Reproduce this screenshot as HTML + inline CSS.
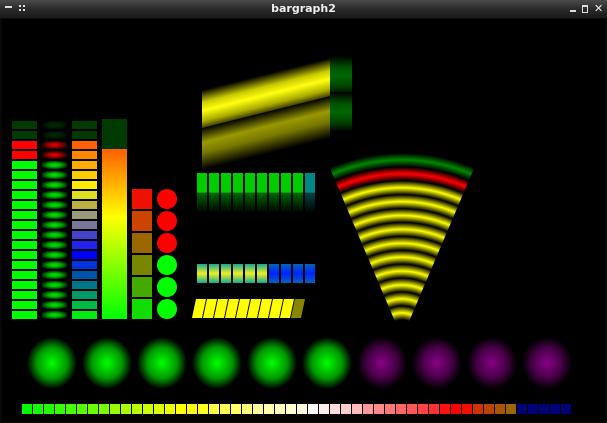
<!DOCTYPE html>
<html><head><style>
html,body{margin:0;padding:0;width:607px;height:423px;overflow:hidden;background:#080808}
#t{position:absolute;left:0;top:0;width:607px;height:18px;background:linear-gradient(#4a4a4a,#2a2a2a 50%,#1a1a1a);color:#eee;font:bold 11px "DejaVu Sans","Liberation Sans",sans-serif;text-align:center;line-height:18px}
#c{position:absolute;left:2px;top:19px;width:603px;height:402px;background:#000}
.a{position:absolute}
</style></head><body>
<div id="t">bargraph2
<span class="a" style="left:5px;top:6px;width:7px;height:2px;background:#ddd"></span>
<span class="a" style="left:19px;top:5px;width:2px;height:2px;background:#ddd;box-shadow:4px 0 #ddd,0 4px #ddd,4px 4px #ddd"></span>
<span class="a" style="left:570px;top:10px;width:6px;height:2px;background:#ddd"></span>
<span class="a" style="left:582px;top:5px;width:4px;height:5px;border:1px solid #ddd;border-top-width:2px"></span>
<span class="a" style="left:594px;top:2px;font-size:11px;line-height:14px">✕</span>
</div>
<div id="c"></div>
<svg id="s" class="a" style="left:0;top:0" width="607" height="423" xmlns="http://www.w3.org/2000/svg"><defs id="d"></defs><g id="g"></g></svg>
<script>
var g=document.getElementById('g'),d=document.getElementById('d'),N='http://www.w3.org/2000/svg',gid=0;
function el(t,a,p){var e=document.createElementNS(N,t);for(var k in a)e.setAttribute(k,a[k]);(p||g).appendChild(e);return e}
function grad(type,attrs,stops){var id='g'+(gid++);var e=el(type,Object.assign({id:id},attrs),d);stops.forEach(function(s){el('stop',{offset:s[0],'stop-color':s[1]},e)});return 'url(#'+id+')'}
function R(x,y,w,h,f){return el('rect',{x:x,y:y,width:w,height:h,fill:f})}
for(var i=0;i<20;i++){var y=121+i*10;var c=i<2?'#003a00':i<4?'#ff0000':'#00ff00';R(12,y,25,8,c);
 var c2=i<2?'#002800':i<4?'#ee0000':'#00ee00';
 R(42,y,25,8,grad('radialGradient',{cx:.5,cy:.5,r:.6},[[0,c2],[.45,i<2?'#002000':i<4?'#990000':'#00aa00'],[1,'#000']]));}
var c3=['#003a00','#003a00','#ff6000','#ff8800','#ffaa00','#ffcc00','#ffee00','#dddd22','#bbb044','#999977','#777799','#4444cc','#2222ee','#0000ff','#0033dd','#0055aa','#007788','#009966','#00bb44','#00ee11'];
for(i=0;i<20;i++)R(72,121+i*10,25,8,c3[i]);
R(102,119,25,30,'#003a00');
R(102,149,25,170,grad('linearGradient',{x1:0,y1:0,x2:0,y2:1},[[0,'#ff6000'],[.4,'#ffff00'],[.6,'#aaff00'],[1,'#00ff00']]));
var c5=['#ee1100','#cc4400','#996600','#778800','#44aa00','#11dd00'];
for(i=0;i<6;i++){R(132,189+i*22,20,20,c5[i]);el('circle',{cx:167,cy:199+i*22,r:10,fill:i<3?'#ff0000':'#00ff00'});}
var tg=el('g',{transform:'translate(202,95) skewY(-14)'});
var yb=grad('linearGradient',{x1:0,y1:0,x2:0,y2:1},[[0,'#000'],[.3,'#cccc00'],[.5,'#ffff10'],[.75,'#aaaa00'],[1,'#000']]);
var yb2=grad('linearGradient',{x1:0,y1:0,x2:0,y2:1},[[0,'#000'],[.35,'#999900'],[.6,'#777700'],[1,'#000']]);
var gb=grad('linearGradient',{x1:0,y1:0,x2:0,y2:1},[[0,'#000'],[.3,'#005500'],[.5,'#006600'],[.75,'#004400'],[1,'#000']]);
el('rect',{x:0,y:-5,width:128,height:42,fill:yb},tg);
el('rect',{x:0,y:33,width:128,height:42,fill:yb2},tg);
R(330,56,22,40,gb);R(330,92,22,40,gb);
var gs=grad('linearGradient',{x1:0,y1:0,x2:0,y2:1},[[0,'#00cc00'],[.48,'#00cc00'],[.5,'#006600'],[1,'#000']]);
var ts=grad('linearGradient',{x1:0,y1:0,x2:0,y2:1},[[0,'#008888'],[.48,'#008888'],[.5,'#004444'],[1,'#000']]);
var yc=grad('linearGradient',{x1:0,y1:0,x2:0,y2:1},[[0,'#11aa99'],[.5,'#eeee22'],[1,'#11aa99']]);
var bc=grad('linearGradient',{x1:0,y1:0,x2:0,y2:1},[[0,'#0066bb'],[.5,'#0022ff'],[1,'#0066bb']]);
for(i=0;i<10;i++){var x=197+i*12;R(x,173,10,40,i<9?gs:ts);R(x,264,10,19,i<6?yc:bc);}
var sg=el('g',{transform:'translate(196,299) skewX(-12)'});
for(i=0;i<10;i++)el('rect',{x:i*11,y:0,width:10,height:19,fill:i<9?'#ffff00':'#888800'},sg);
var cx=402,cy=338,A=23*Math.PI/180;
function arcP(r1,r2){var s=Math.sin(A),c=Math.cos(A);
 return 'M'+(cx-r2*s)+' '+(cy-r2*c)+' A'+r2+' '+r2+' 0 0 1 '+(cx+r2*s)+' '+(cy-r2*c)+' L'+(cx+r1*s)+' '+(cy-r1*c)+' A'+r1+' '+r1+' 0 0 0 '+(cx-r1*s)+' '+(cy-r1*c)+'Z';}
for(i=0;i<12;i++){var r2=185-i*13.9,r1=r2-13.9;var col=i==0?'#008800':i==1?'#ff0000':'#ffff00';
 var f=grad('radialGradient',{gradientUnits:'userSpaceOnUse',cx:cx,cy:cy,r:r2},[[r1/r2,'#000'],[(r1+7)/r2,col],[1,'#000']]);
 el('path',{d:arcP(r1,r2),fill:f});}
for(i=0;i<10;i++){var gc=grad('radialGradient',{cx:.5,cy:.5,r:.5},i<6?[[0,'#00ff00'],[.6,'#009900'],[1,'#000']]:[[0,'#880088'],[.6,'#440044'],[1,'#000']]);
 el('ellipse',{cx:52+i*55,cy:363,rx:25,ry:26,fill:gc});}
var sc=['#00ff00','#11ff00','#22ff00','#33ff00','#44ff00','#55ff00','#66ff00','#77ff00','#99ff00','#aaff00','#bbff00','#ccff00','#ddff00','#eeff00','#ffff00','#ffff11','#ffff22','#ffff44','#ffff55','#ffff66','#ffff77','#ffff99','#ffffaa','#ffffbb','#ffffcc','#ffffdd','#ffffff','#ffeeee','#ffdddd','#ffcccc','#ffbbbb','#ff9999','#ff8888','#ff7777','#ff6666','#ff5555','#ff4444','#ff3333','#ff1111','#ff0000','#ee1100','#cc3300','#bb4400','#aa5500','#996600','#000077','#000077','#000077','#000077','#000077'];
for(i=0;i<50;i++)R(22+i*11,404,10,10,sc[i]);
</script>
</body></html>
